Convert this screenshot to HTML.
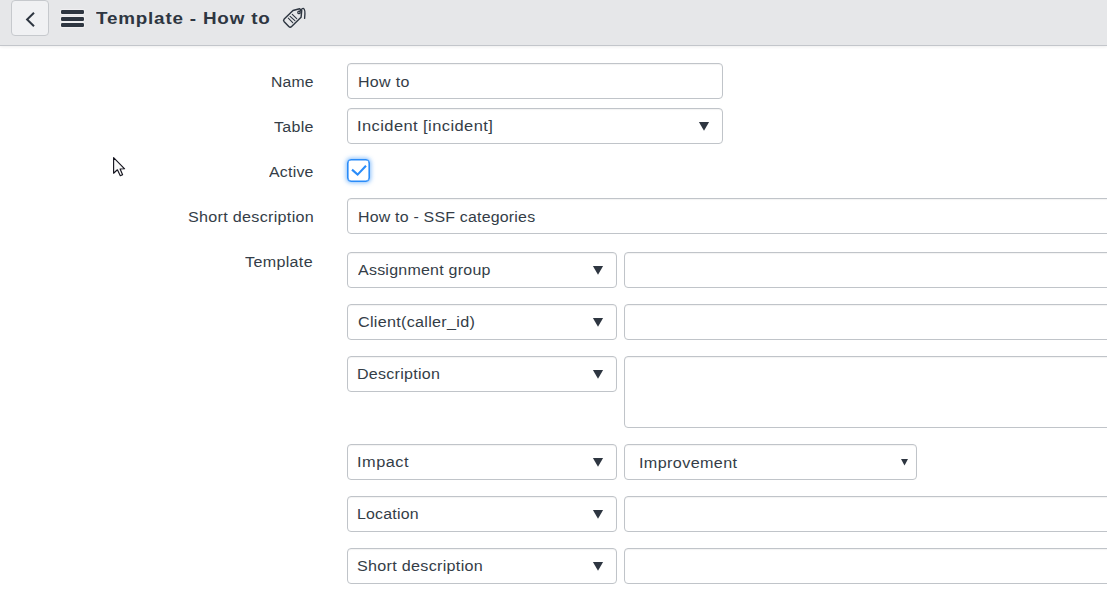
<!DOCTYPE html>
<html>
<head>
<meta charset="utf-8">
<style>
html,body{margin:0;padding:0;width:1107px;height:594px;overflow:hidden;background:#fff;}
body{position:relative;font-family:"Liberation Sans",sans-serif;color:#343d47;}
.hdr{position:absolute;left:0;top:0;width:1107px;height:45px;background:#e6e7e9;border-bottom:1px solid #c3c6cb;box-shadow:0 1px 3px rgba(0,0,0,0.07);}
.back{position:absolute;left:11px;top:0px;width:36px;height:34px;border:1px solid #c6c9cd;border-radius:4px;background:#f0f1f3;}
.bar{position:absolute;left:61px;width:23px;height:4px;border-radius:1.2px;background:#2e3641;box-shadow:0 0 1px 1px rgba(255,255,255,0.4);}
.t{position:absolute;white-space:nowrap;line-height:20px;transform-origin:0 0;}
.box{position:absolute;box-sizing:border-box;border:1px solid #c0c4c9;border-radius:4px;background:#fff;box-shadow:inset 0 1px 1px rgba(0,0,0,0.05);}
svg{position:absolute;overflow:visible;}
</style>
</head>
<body>
<div class="hdr"></div>
<div class="back"></div>
<svg style="left:0;top:0" width="60" height="45">
  <polyline points="34,12.7 27.1,19.5 34,26.3" fill="none" stroke="#2e3641" stroke-width="2"/>
</svg>
<div class="bar" style="top:10px"></div>
<div class="bar" style="top:17px"></div>
<div class="bar" style="top:23px"></div>
<svg style="left:280px;top:4px" width="30" height="28">
  <g fill="none" stroke="#2e3641" stroke-linejoin="round" stroke-linecap="round">
    <path stroke-width="1.45" d="M13,6.5 L19.6,4.7 L21.7,6.5 L21.1,13.3 L11.6,22.5 Q10.2,23.8 8.8,22.5 L4.2,17.8 Q2.9,16.4 4.2,15 Z"/>
    <circle stroke-width="1.3" cx="19" cy="8.4" r="1.2"/>
    <path stroke-width="1.35" d="M19.6,7.7 Q21.6,4.3 23.3,4.3 Q25.7,5 24.6,14.4"/>
    <path stroke-width="1.1" d="M8.3,14.2 L12.7,18.6 M10.1,12.3 L14.9,16.7 M12.3,10.4 L16.7,14.6"/>
  </g>
</svg>

<div class="box" style="left:347px;top:63px;width:376px;height:36px"></div>
<div class="box" style="left:347px;top:108px;width:376px;height:36px"></div>
<svg style="left:0;top:0" width="1" height="1"><polygon points="698.9,122 709.1,122 704,130.8" fill="#2e3641"/></svg>

<div style="position:absolute;left:347px;top:159px;width:21px;height:21px;border:1px solid #2a8cf9;border-radius:4px;background:#fff;box-shadow:0 0 4px 1px rgba(42,140,249,0.55), inset 0 0 0 0.6px #2a8cf9;"></div>
<svg style="left:0;top:0" width="1" height="1"><polyline points="352,169.6 357.6,174.6 366,165.8" fill="none" stroke="#2a8cf9" stroke-width="2.1"/></svg>

<div class="box" style="left:347px;top:198px;width:800px;height:36px"></div>

<div class="box" style="left:347px;top:252px;width:270px;height:36px"></div>
<div class="box" style="left:624px;top:252px;width:600px;height:36px"></div>
<div class="box" style="left:347px;top:304px;width:270px;height:36px"></div>
<div class="box" style="left:624px;top:304px;width:600px;height:36px"></div>
<div class="box" style="left:347px;top:356px;width:270px;height:36px"></div>
<div class="box" style="left:624px;top:356px;width:600px;height:72px"></div>
<div class="box" style="left:347px;top:444px;width:270px;height:36px"></div>
<div class="box" style="left:624px;top:444px;width:293px;height:36px"></div>
<div class="box" style="left:347px;top:496px;width:270px;height:36px"></div>
<div class="box" style="left:624px;top:496px;width:600px;height:36px"></div>
<div class="box" style="left:347px;top:548px;width:270px;height:36px"></div>
<div class="box" style="left:624px;top:548px;width:600px;height:36px"></div>
<svg style="left:0;top:0" width="1" height="1">
  <g fill="#2e3641">
    <polygon points="592.9,266 603.1,266 598,274.8"/>
    <polygon points="592.9,318 603.1,318 598,326.8"/>
    <polygon points="592.9,370 603.1,370 598,378.8"/>
    <polygon points="592.9,458 603.1,458 598,466.8"/>
    <polygon points="592.9,510 603.1,510 598,518.8"/>
    <polygon points="592.9,562 603.1,562 598,570.8"/>
    <polygon points="901,459 908,459 904.5,465.5"/>
  </g>
</svg>

<div class="t" style="left:96.30px;top:9px;font-size:17px;letter-spacing:0.726px;transform:scaleX(1.1085);font-weight:bold;line-height:20px;color:#2e3641;">Template - How to</div>
<div class="t" style="left:270.99px;top:72px;font-size:15.5px;letter-spacing:0.181px;transform:scaleX(1.0138);">Name</div>
<div class="t" style="left:273.80px;top:117px;font-size:15.5px;letter-spacing:0.291px;transform:scaleX(1.0324);">Table</div>
<div class="t" style="left:268.90px;top:162px;font-size:15.5px;letter-spacing:0.214px;transform:scaleX(1.0262);">Active</div>
<div class="t" style="left:187.56px;top:207px;font-size:15.5px;letter-spacing:0.282px;transform:scaleX(1.0409);">Short description</div>
<div class="t" style="left:245.20px;top:252px;font-size:15.5px;letter-spacing:0.324px;transform:scaleX(1.0373);">Template</div>
<div class="t" style="left:358.47px;top:72px;font-size:15.5px;letter-spacing:0.291px;transform:scaleX(1.0319);">How to</div>
<div class="t" style="left:357.14px;top:116px;font-size:15.5px;letter-spacing:0.394px;transform:scaleX(1.0634);">Incident [incident]</div>
<div class="t" style="left:358.37px;top:207px;font-size:15.5px;letter-spacing:0.201px;transform:scaleX(1.0272);">How to - SSF categories</div>
<div class="t" style="left:357.70px;top:260px;font-size:15.5px;letter-spacing:0.243px;transform:scaleX(1.0300);">Assignment group</div>
<div class="t" style="left:357.90px;top:312px;font-size:15.5px;letter-spacing:0.273px;transform:scaleX(1.0425);">Client(caller_id)</div>
<div class="t" style="left:356.97px;top:364px;font-size:15.5px;letter-spacing:0.256px;transform:scaleX(1.0349);">Description</div>
<div class="t" style="left:356.95px;top:452px;font-size:15.5px;letter-spacing:0.474px;transform:scaleX(1.0543);">Impact</div>
<div class="t" style="left:639.36px;top:453px;font-size:15.5px;letter-spacing:0.365px;transform:scaleX(1.0422);">Improvement</div>
<div class="t" style="left:357.27px;top:504px;font-size:15.5px;letter-spacing:0.202px;transform:scaleX(1.0254);">Location</div>
<div class="t" style="left:356.86px;top:556px;font-size:15.5px;letter-spacing:0.282px;transform:scaleX(1.0409);">Short description</div>

<svg style="left:112px;top:156px" width="16" height="22">
  <path d="M1.6,1.6 L1.6,17.2 L5.4,13.8 L8.3,19.7 L10.6,18.7 L8.1,13 L12.6,12.8 Z" fill="#f8f8f8" stroke="#15151f" stroke-width="1.15" stroke-linejoin="round"/>
</svg>
</body>
</html>
